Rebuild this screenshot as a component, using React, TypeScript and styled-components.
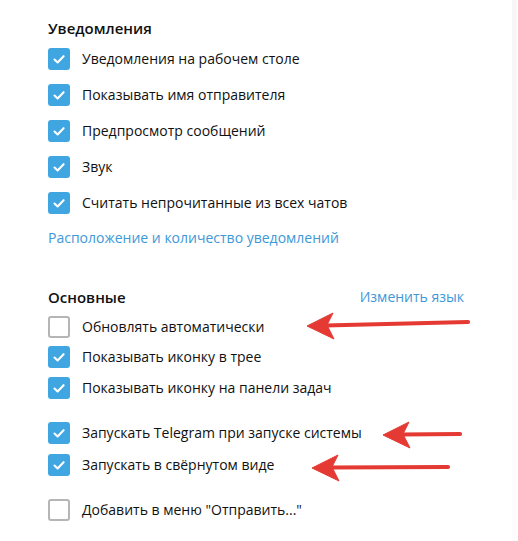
import React from "react";
import styled, { createGlobalStyle } from "styled-components";

const GlobalStyle = createGlobalStyle`
  html, body {
    margin: 0;
    padding: 0;
    background: #ffffff;
  }
  body {
    font-family: "Open Sans", "Noto Sans", sans-serif;
    color: #000000;
  }
`;

type Item = { label: string; checked: boolean; top: number };

const notifications: Item[] = [
  { label: "Уведомления на рабочем столе", checked: true, top: 10 },
  { label: "Показывать имя отправителя", checked: true, top: 14 },
  { label: "Предпросмотр сообщений", checked: true, top: 14 },
  { label: "Звук", checked: true, top: 14 },
  { label: "Считать непрочитанные из всех чатов", checked: true, top: 14 },
];

const general: Item[] = [
  { label: "Обновлять автоматически", checked: false, top: 9 },
  { label: "Показывать иконку в трее", checked: true, top: 8 },
  { label: "Показывать иконку на панели задач", checked: true, top: 9 },
  { label: "Запускать Telegram при запуске системы", checked: true, top: 23 },
  { label: "Запускать в свёрнутом виде", checked: true, top: 10 },
  { label: 'Добавить в меню "Отправить..."', checked: false, top: 23 },
];

export default function App() {
  return (
    <>
      <GlobalStyle />
      <Page>
        <Content>
          <Section>
            <Title>Уведомления</Title>
            {notifications.map((it) => (
              <Row key={it.label} $top={it.top}>
                <Box $checked={it.checked}>{it.checked && <Check />}</Box>
                <Label>{it.label}</Label>
              </Row>
            ))}
            <Link $top={14}>Расположение и количество уведомлений</Link>
          </Section>

          <Section $top={39}>
            <HeaderRow>
              <Title>Основные</Title>
              <HeaderLink>Изменить язык</HeaderLink>
            </HeaderRow>
            {general.map((it) => (
              <Row key={it.label} $top={it.top}>
                <Box $checked={it.checked}>{it.checked && <Check />}</Box>
                <Label>{it.label}</Label>
              </Row>
            ))}
          </Section>

          <Arrows viewBox="0 0 518 541" width="518" height="541">
            <Arrow tip={[307, 326]} tail={[468, 322]} />
            <Arrow tip={[383, 435]} tail={[460, 434]} />
            <Arrow tip={[312, 468]} tail={[448, 467]} />
          </Arrows>
        </Content>
        <Scrollbar>
          <Thumb />
        </Scrollbar>
      </Page>
    </>
  );
}

const Check = () => (
  <svg width="22" height="22" viewBox="0 0 22 22">
    <path
      d="M6.5 11.5 L9.6 14.4 L15.6 8.2"
      fill="none"
      stroke="#ffffff"
      strokeWidth="2.1"
      strokeLinecap="round"
      strokeLinejoin="round"
    />
  </svg>
);

const Arrow = ({ tip, tail }: { tip: [number, number]; tail: [number, number] }) => {
  const [tx, ty] = tip;
  const [ex, ey] = tail;
  const head = `M${tx} ${ty} L${tx + 26} ${ty - 13} L${tx + 20} ${ty - 1} L${tx + 27} ${ty + 13} Z`;
  return (
    <g fill="#e53a33" stroke="#e53a33">
      <line x1={tx + 18} y1={ty - 0.5} x2={ex} y2={ey} strokeWidth="4.2" strokeLinecap="round" />
      <path d={head} strokeWidth="1" strokeLinejoin="round" />
    </g>
  );
};

const Page = styled.div`
  display: flex;
  width: 518px;
  height: 541px;
  overflow: hidden;
`;

const Content = styled.div`
  position: relative;
  flex: 1;
  padding: 18px 0 0 48px;
`;

const Section = styled.div<{ $top?: number }>`
  display: flex;
  flex-direction: column;
  margin-top: ${(p) => p.$top ?? 0}px;
  width: 416px;
`;

const Title = styled.div`
  font-size: 15px;
  font-weight: 600;
  line-height: 20px;
  color: #111111;
`;

const HeaderRow = styled.div`
  display: flex;
  justify-content: space-between;
  align-items: center;
`;

const HeaderLink = styled.div`
  font-size: 14px;
  line-height: 20px;
  color: #3d98d8;
`;

const Row = styled.div<{ $top: number }>`
  display: flex;
  align-items: center;
  gap: 12px;
  height: 22px;
  margin-top: ${(p) => p.$top}px;
`;

const Box = styled.div<{ $checked: boolean }>`
  box-sizing: border-box;
  width: 22px;
  height: 22px;
  border-radius: 3px;
  flex-shrink: 0;
  background: ${(p) => (p.$checked ? "#40a6e2" : "#ffffff")};
  border: ${(p) => (p.$checked ? "none" : "2px solid #b5b5b5")};
  display: flex;
  align-items: center;
  justify-content: center;
`;

const Label = styled.span`
  font-size: 14px;
  line-height: 20px;
  color: #111111;
  white-space: nowrap;
`;

const Link = styled.div<{ $top: number }>`
  margin-top: ${(p) => p.$top}px;
  font-size: 14px;
  line-height: 20px;
  color: #3d98d8;
`;

const Arrows = styled.svg`
  position: absolute;
  left: 0;
  top: 0;
  pointer-events: none;
`;

const Scrollbar = styled.div`
  width: 5px;
  margin-right: 1px;
  background: #fcfcfc;
  display: flex;
  flex-direction: column;
`;

const Thumb = styled.div`
  height: 200px;
  background: #f6f6f6;
`;
